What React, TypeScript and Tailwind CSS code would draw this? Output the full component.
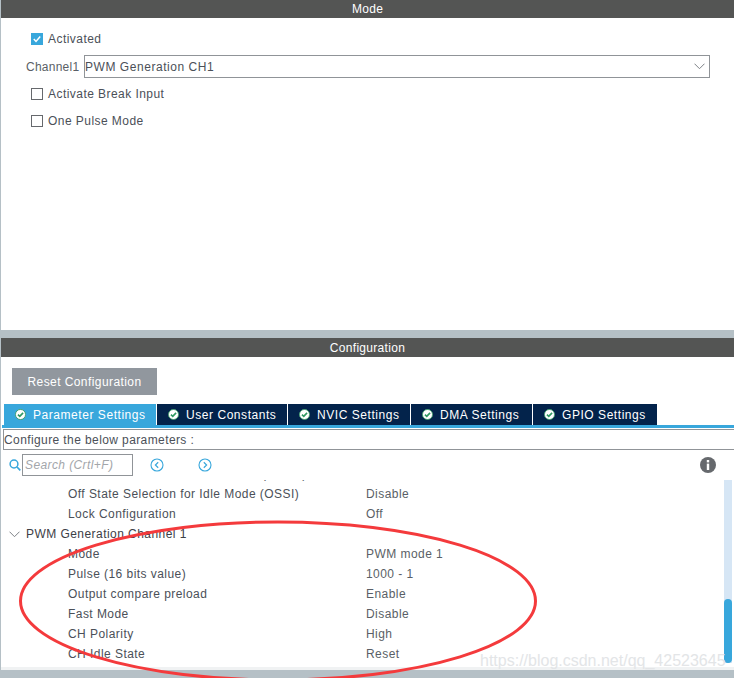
import React from "react";

const font = "[font-family:'Liberation_Sans',Arial,sans-serif]";

function CheckBadge() {
  return (
    <svg width="11" height="11" viewBox="0 0 12 12" className="shrink-0">
      <circle cx="6" cy="6" r="5.5" fill="#ffffff" stroke="#3f9e6c" strokeWidth="1" />
      <path d="M3.2 6.2 L5.2 8 L8.8 4.2" fill="none" stroke="#2f9a62" strokeWidth="1.8" />
    </svg>
  );
}

function Checkbox({ label, checked }: { label: string; checked?: boolean }) {
  return (
    <div className="flex items-center h-[17px] pl-[30px]">
      {checked ? (
        <div className="w-3 h-3 bg-[#38a7dc] flex items-center justify-center shrink-0">
          <svg width="10" height="10" viewBox="0 0 10 10">
            <path d="M1.8 5 L4 7.4 L8.2 2.4" fill="none" stroke="#ffffff" strokeWidth="1.5" />
          </svg>
        </div>
      ) : (
        <div className="w-3 h-3 border border-[#66696d] bg-white shrink-0"></div>
      )}
      <span className="ml-[5px] text-[#4b5058]">{label}</span>
    </div>
  );
}

function Tab({ label, active, width }: { label: string; active?: boolean; width: string }) {
  return (
    <div
      className={`h-[21px] flex items-center pl-[11px] gap-[7px] text-white tracking-[0.55px] ${width} ${active ? "bg-[#38a7dc]" : "bg-[#03234b]"}`}
    >
      <CheckBadge />
      <span>{label}</span>
    </div>
  );
}

function Row({ label, value }: { label: string; value?: string }) {
  return (
    <div className="flex items-center h-5 shrink-0">
      <span className="w-[365px] pl-[67px] text-[#4b5058] whitespace-nowrap shrink-0">{label}</span>
      <span className="text-[#5a5f66] whitespace-nowrap">{value}</span>
    </div>
  );
}

export default function App() {
  return (
    <div className={`relative w-[734px] h-[678px] overflow-hidden bg-[#b5c0c6] pl-px flex flex-col text-[12px] tracking-[0.45px] ${font}`}>
      {/* Mode */}
      <div className="h-[18px] bg-[#545554] text-white flex items-center justify-center tracking-[0.3px] shrink-0">Mode</div>
      <div className="h-[312px] bg-white shrink-0 pt-[12px]">
        <Checkbox label="Activated" checked />
        <div className="flex items-center mt-[8px] pl-[25px] h-[23px]">
          <span className="text-[#5a5f66] w-[58px] tracking-[0.25px]">Channel1</span>
          <div className="w-[626px] h-[23px] border border-[#909498] flex items-center justify-between pr-[4px] text-[#4b5058] tracking-[0.55px]">
            <span>PWM Generation CH1</span>
            <svg width="11" height="7" viewBox="0 0 11 7">
              <path d="M0.5 0.7 L5.5 5.7 L10.5 0.7" fill="none" stroke="#7d8186" strokeWidth="1" />
            </svg>
          </div>
        </div>
        <div className="mt-[7px]">
          <Checkbox label="Activate Break Input" />
        </div>
        <div className="mt-[10px]">
          <Checkbox label="One Pulse Mode" />
        </div>
      </div>

      {/* Configuration */}
      <div className="h-2 shrink-0"></div>
      <div className="h-[19px] bg-[#545554] text-white flex items-center justify-center tracking-[0.3px] shrink-0">Configuration</div>
      <div className="flex-1 min-h-0 bg-white flex flex-col">
        <div className="pt-[11px] pl-[11px] shrink-0">
          <div className="w-[145px] h-[27px] bg-[#91979e] text-white flex items-center justify-center tracking-[0.42px]">
            Reset Configuration
          </div>
        </div>
        <div className="flex gap-px mt-[9px] pl-[3px] shrink-0">
          <Tab label="Parameter Settings" active width="w-[152px]" />
          <Tab label="User Constants" width="w-[130px]" />
          <Tab label="NVIC Settings" width="w-[122px]" />
          <Tab label="DMA Settings" width="w-[121px]" />
          <Tab label="GPIO Settings" width="w-[124px]" />
        </div>
        <div className="h-[3px] bg-[#38a7dc] ml-px shrink-0"></div>
        <div className="h-[21px] ml-[2px] mt-px border border-r-0 border-[#909498] flex items-center text-[#4b5058] tracking-[0.4px] shrink-0">
          Configure the below parameters :
        </div>
        <div className="h-[30px] flex items-center shrink-0 pl-[8px] pr-[18px]">
          <svg width="12" height="12" viewBox="0 0 12 12" className="shrink-0">
            <circle cx="5" cy="5" r="3.9" fill="none" stroke="#38a7dc" strokeWidth="1.5" />
            <path d="M8 8 L11.3 11.3" stroke="#38a7dc" strokeWidth="1.7" />
          </svg>
          <div className="ml-[1px] w-[111px] h-[22px] border border-[#909498] flex items-center pl-[2px] italic text-[#a3a6aa] tracking-[0.4px]">
            Search (Crtl+F)
          </div>
          <svg width="14" height="14" viewBox="0 0 14 14" className="ml-[17px] shrink-0">
            <circle cx="7" cy="7" r="6" fill="none" stroke="#38a7dc" strokeWidth="1.1" />
            <path d="M8.2 4.3 L5.4 7 L8.2 9.7" fill="none" stroke="#38a7dc" strokeWidth="1.2" />
          </svg>
          <svg width="14" height="14" viewBox="0 0 14 14" className="ml-[34px] shrink-0">
            <circle cx="7" cy="7" r="6" fill="none" stroke="#38a7dc" strokeWidth="1.1" />
            <path d="M5.8 4.3 L8.6 7 L5.8 9.7" fill="none" stroke="#38a7dc" strokeWidth="1.2" />
          </svg>
          <svg width="16" height="16" viewBox="0 0 16 16" className="ml-auto shrink-0">
            <circle cx="8" cy="8" r="8" fill="#66696d" />
            <rect x="6.8" y="3" width="2.4" height="2.4" fill="#ffffff" />
            <rect x="6.8" y="6.6" width="2.4" height="6.4" fill="#ffffff" />
          </svg>
        </div>
        <div className="flex-1 min-h-0 flex">
          <div className="flex-1 min-w-0 overflow-hidden flex flex-col justify-end pb-[3px]">
            <Row label="Off State Selection for Run Mode (OSSR)" value="Disable" />
            <Row label="Off State Selection for Idle Mode (OSSI)" value="Disable" />
            <Row label="Lock Configuration" value="Off" />
            <div className="flex items-center h-5 shrink-0 pl-[8px] text-[#3c4046]">
              <svg width="11" height="7" viewBox="0 0 11 7" className="shrink-0">
                <path d="M0.5 0.7 L5.5 5.7 L10.5 0.7" fill="none" stroke="#7d8186" strokeWidth="1" />
              </svg>
              <span className="ml-[6px]">PWM Generation Channel 1</span>
            </div>
            <Row label="Mode" value="PWM mode 1" />
            <Row label="Pulse (16 bits value)" value="1000 - 1" />
            <Row label="Output compare preload" value="Enable" />
            <Row label="Fast Mode" value="Disable" />
            <Row label="CH Polarity" value="High" />
            <Row label="CH Idle State" value="Reset" />
          </div>
          <div className="w-2 mr-[2px] mb-[4px] bg-[#d6e6f5] flex flex-col justify-end shrink-0">
            <div className="h-[64px] bg-[#38a7dc] rounded-[4px]"></div>
          </div>
        </div>
      </div>
      <div className="h-[11px] shrink-0 border-t-[3px] border-[#f0f2f3]"></div>

      {/* annotation drawn over the screenshot */}
      <svg width="734" height="678" viewBox="0 0 734 678" className="absolute left-0 top-0 pointer-events-none">
        <ellipse cx="278" cy="601" rx="257.5" ry="79" fill="none" stroke="#f43a3c" strokeWidth="3" />
      </svg>
      <div className="absolute left-[480px] top-[649px] text-[16px] tracking-[0px] text-[#e3e5e7] whitespace-nowrap">
        https://blog.csdn.net/qq_42523645
      </div>
    </div>
  );
}
